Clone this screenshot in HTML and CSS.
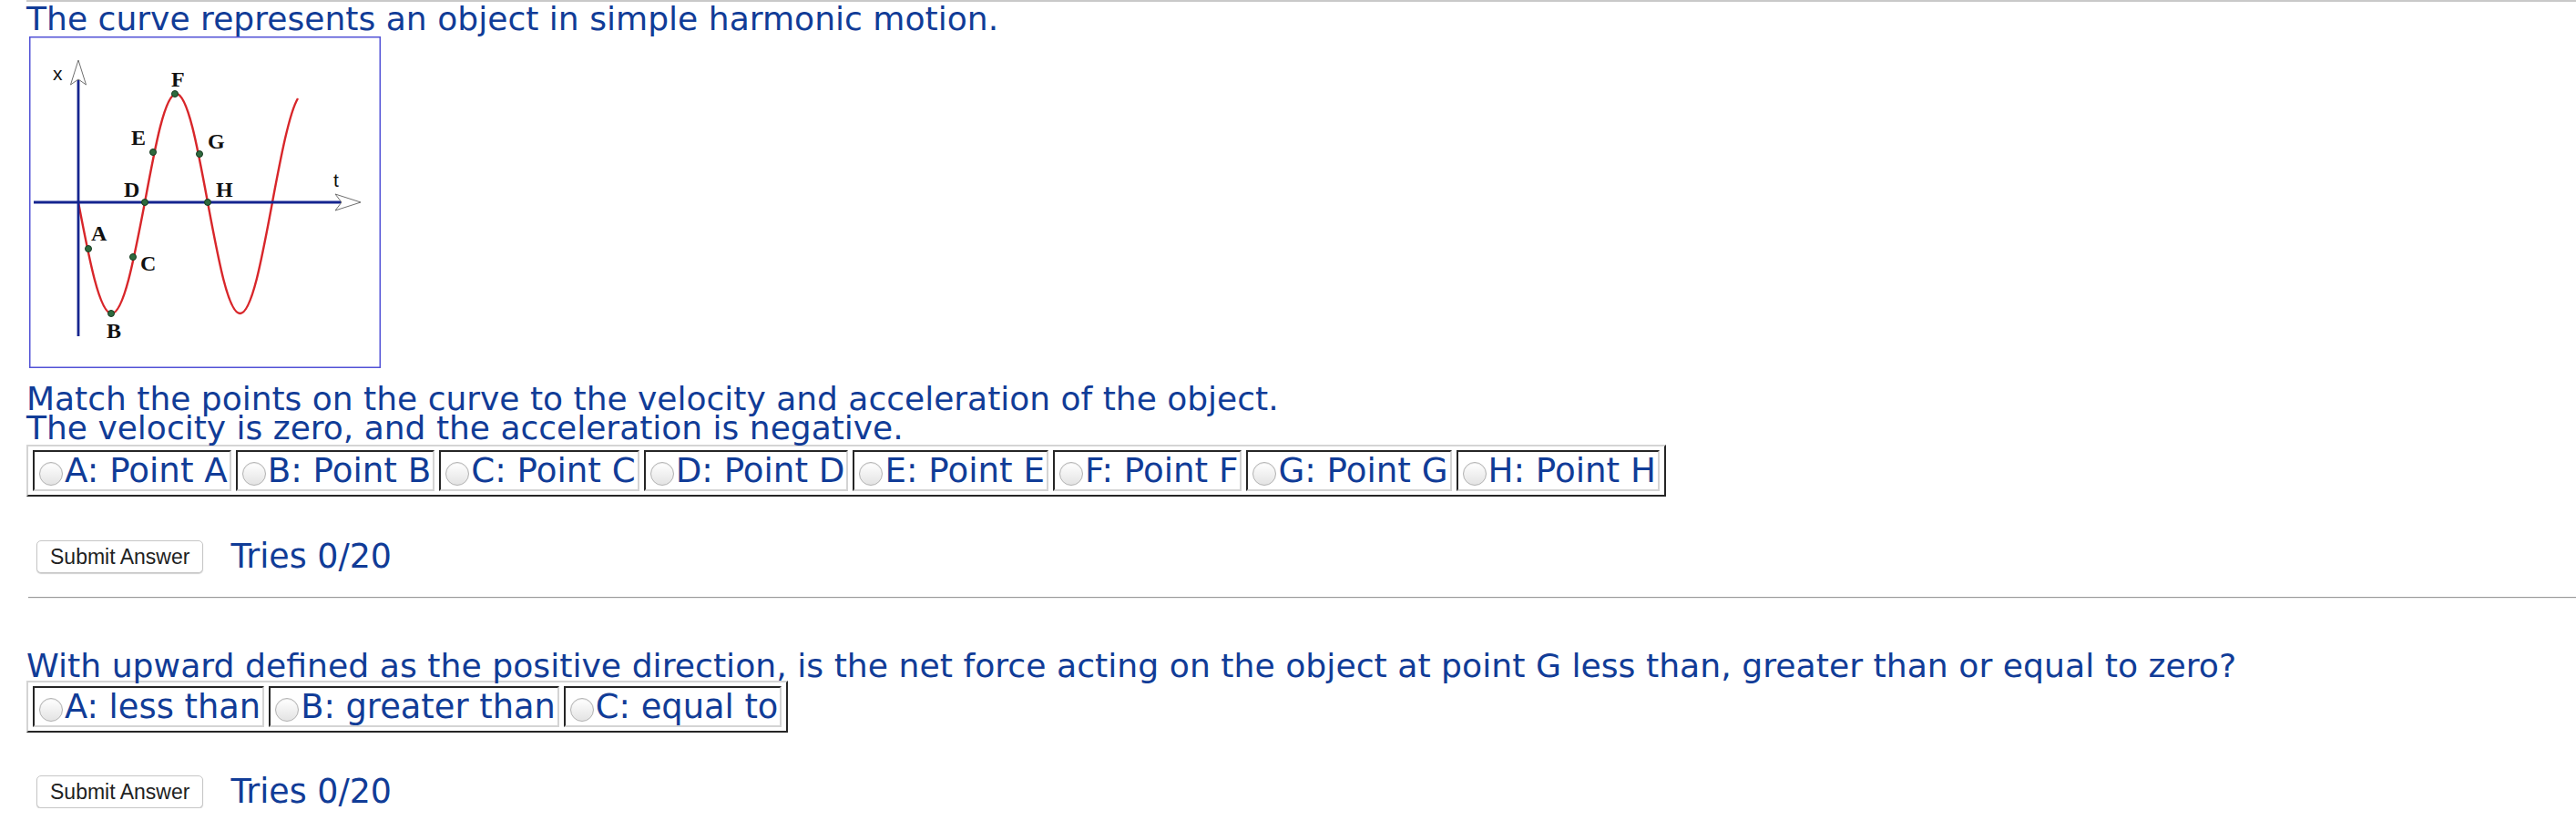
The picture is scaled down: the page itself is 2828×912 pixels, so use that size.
FILE: index.html
```html
<!DOCTYPE html>
<html lang="en">
<head>
<meta charset="utf-8">
<title>Simple harmonic motion</title>
<link rel="stylesheet" href="styles.css">
</head>
<body>
<div class="page">
  <div class="rule-top"></div>
  <p class="title">The curve represents an object in simple harmonic motion.</p>
  <div class="figure">
    <svg width="386" height="364" viewBox="32 40 386 364" xmlns="http://www.w3.org/2000/svg">
      <rect x="32.75" y="40.75" width="384.5" height="362.5" fill="#fff" stroke="#5252d6" stroke-width="1.5"/>
      <path d="M86,222 C97.9,284.5 109.3,344 122.5,344 C135.7,344 147.1,284.5 159,222 C170.3,161 181,103 193.5,103 C206,103 216.75,161 228,222 C239.6,284.5 250.65,344 263.5,344 C276.35,344 287.4,284.5 299,222 C308.3,172.2 317.7,123.4 327,108" fill="none" stroke="#d8262a" stroke-width="2.4"/>
      <line x1="37" y1="222" x2="376" y2="222" stroke="#15258f" stroke-width="2.8"/>
      <line x1="86" y1="88" x2="86" y2="369" stroke="#15258f" stroke-width="2.8"/>
      <polygon points="86,66 94.5,93 86,87 77.5,93" fill="#fff" stroke="#6f6f6f" stroke-width="1"/>
      <polygon points="396,222 368,213 375,222 368,231" fill="#fff" stroke="#6f6f6f" stroke-width="1"/>
      <text x="58" y="88" class="axis-label">x</text>
      <text x="366" y="205" class="axis-label">t</text>
      <text x="188" y="95" class="pt-label">F</text>
      <text x="144" y="159" class="pt-label">E</text>
      <text x="228" y="163" class="pt-label">G</text>
      <text x="136" y="216" class="pt-label">D</text>
      <text x="237" y="216" class="pt-label">H</text>
      <text x="100" y="264" class="pt-label">A</text>
      <text x="154" y="297" class="pt-label">C</text>
      <text x="117" y="371" class="pt-label">B</text>
      <g class="dots">
        <circle cx="97" cy="273" r="3.5"/>
        <circle cx="122" cy="344" r="3.5"/>
        <circle cx="146" cy="282" r="3.5"/>
        <circle cx="159" cy="222" r="3.5"/>
        <circle cx="168" cy="167" r="3.5"/>
        <circle cx="192" cy="103" r="3.5"/>
        <circle cx="219" cy="169" r="3.5"/>
        <circle cx="228" cy="222" r="3.5"/>
      </g>
    </svg>
  </div>
  <p class="prompt">Match the points on the curve to the velocity and acceleration of the object.<br>The velocity is zero, and the acceleration is negative.</p>
  <table class="choices">
    <tr>
      <td><label><input type="radio" name="q1">A: Point A</label></td>
      <td><label><input type="radio" name="q1">B: Point B</label></td>
      <td><label><input type="radio" name="q1">C: Point C</label></td>
      <td><label><input type="radio" name="q1">D: Point D</label></td>
      <td><label><input type="radio" name="q1">E: Point E</label></td>
      <td><label><input type="radio" name="q1">F: Point F</label></td>
      <td><label><input type="radio" name="q1">G: Point G</label></td>
      <td><label><input type="radio" name="q1">H: Point H</label></td>
    </tr>
  </table>
  <div class="submit-row">
    <button class="submit" type="button">Submit Answer</button>
    <span class="tries">Tries 0/20</span>
  </div>
  <div class="rule"></div>
  <p class="prompt prompt-second">With upward defined as the positive direction, is the net force acting on the object at point G less than, greater than or equal to zero?</p>
  <table class="choices choices-second">
    <tr>
      <td><label><input type="radio" name="q2">A: less than</label></td>
      <td><label><input type="radio" name="q2">B: greater than</label></td>
      <td><label><input type="radio" name="q2">C: equal to</label></td>
    </tr>
  </table>
  <div class="submit-row submit-row-second">
    <button class="submit" type="button">Submit Answer</button>
    <span class="tries">Tries 0/20</span>
  </div>
</div>
</body>
</html>
```
FILE: styles.css
```css
html, body {
  margin: 0;
  padding: 0;
  background: #ffffff;
}

.page {
  padding-left: 29px;
  font-family: "DejaVu Sans", Verdana, sans-serif;
  color: #113c97;
}

.rule-top {
  height: 2px;
  background: #c9c9c9;
}

.title {
  margin: 0;
  font-size: 36.1px;
  line-height: 38px;
  white-space: nowrap;
}

.figure {
  margin-left: 3px;
  width: 386px;
  height: 364px;
}

.figure svg {
  display: block;
}

.axis-label {
  font-family: "Liberation Sans", Arial, sans-serif;
  font-size: 21px;
  fill: #111;
}

.pt-label {
  font-family: "Liberation Serif", "Times New Roman", serif;
  font-weight: bold;
  font-size: 24px;
  fill: #111;
}

.dots circle {
  fill: #2e6a3e;
  stroke: #173a20;
  stroke-width: 1;
}

.prompt {
  margin: 18px 0 0;
  font-size: 36px;
  line-height: 32px;
  white-space: nowrap;
}

.prompt-second {
  margin-top: 58px;
  font-size: 36.2px;
}

.choices {
  margin-top: 2px;
  border-collapse: separate;
  border-spacing: 5px 4px;
  border: 2px solid;
  border-color: #d4d4d4 #262626 #262626 #d4d4d4;
}

.choices-second {
  margin-top: 0;
}

.choices td {
  padding: 1px 2px 1px 5px;
  border: 2px solid;
  border-color: #262626 #d4d4d4 #d4d4d4 #262626;
  font-size: 37.2px;
  line-height: 39px;
  white-space: nowrap;
  color: #113c97;
}

.choices-second td {
  font-size: 36.8px;
}

.choices input[type="radio"] {
  -webkit-appearance: none;
  appearance: none;
  box-sizing: border-box;
  width: 26px;
  height: 26px;
  margin: 0 2px 0 0;
  vertical-align: -4px;
  border-radius: 50%;
  border: 1px solid #b2b2b2;
  background: linear-gradient(#ffffff, #e3e3e3);
  box-shadow: inset 0 1px 1px rgba(0, 0, 0, 0.08);
}

.submit-row {
  margin-top: 48px;
  padding-left: 11px;
  display: flex;
  align-items: center;
  gap: 30px;
  height: 36px;
}

.submit-row-second {
  margin-top: 47px;
}

.submit {
  box-sizing: border-box;
  height: 36px;
  padding: 0 14px;
  border: 1px solid #c6c6c6;
  border-radius: 5px;
  background: #ffffff;
  box-shadow: 0 1px 1px rgba(0, 0, 0, 0.18);
  font-family: "Liberation Sans", Arial, sans-serif;
  font-size: 23px;
  color: #222222;
}

.tries {
  font-size: 36.4px;
  line-height: 36px;
}

.rule {
  margin-top: 26px;
  margin-left: 2px;
  height: 0;
  border-top: 1px solid #9b9b9b;
  border-bottom: 1px solid #ececec;
}
```
